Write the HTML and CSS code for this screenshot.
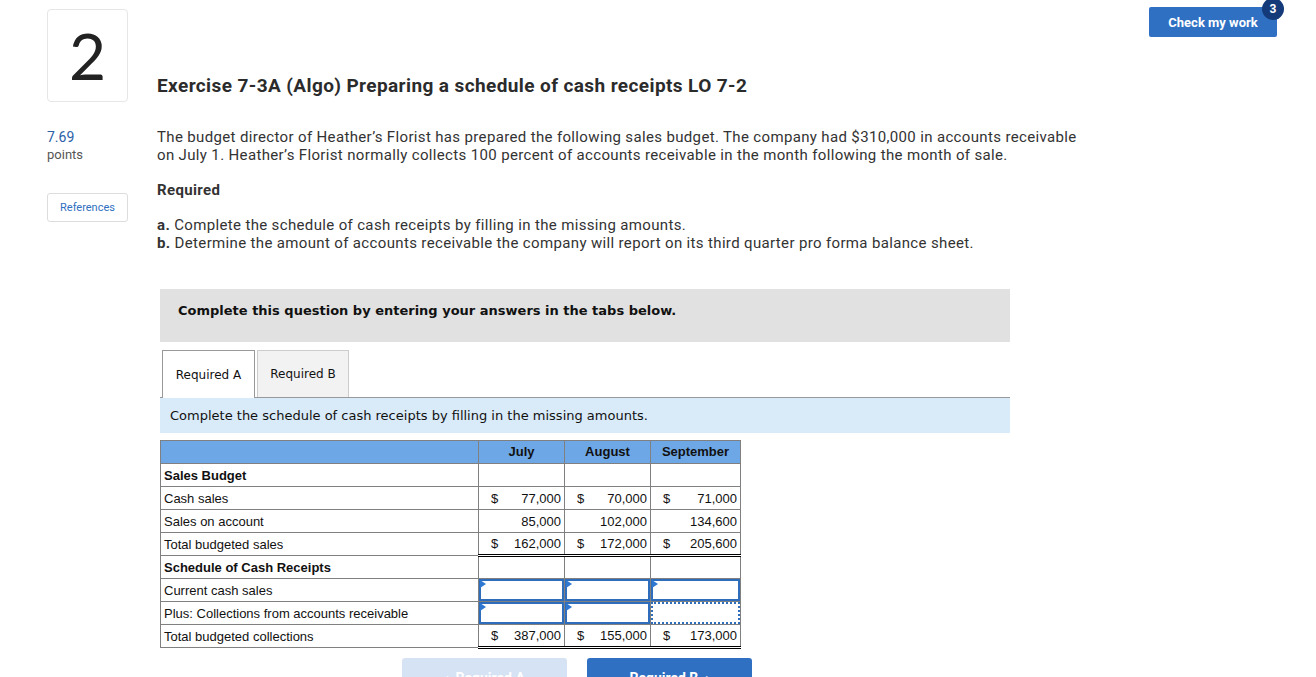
FILE: index.html
```html
<!DOCTYPE html>
<html lang="en">
<head>
    <meta charset="UTF-8">
    <title>Exercise 7-3A (Algo)</title>
    <link rel="stylesheet" href="styles.css">
</head>
<body>
<div class="page">
    <div class="qnum">2</div>
    <h1 class="title">Exercise 7-3A (Algo) Preparing a schedule of cash receipts LO 7-2</h1>
    <div class="check-wrap">
        <button class="check-btn">Check my work</button>
        <span class="badge">3</span>
    </div>

    <div class="points">
        <div class="pts-val">7.69</div>
        <div class="pts-lbl">points</div>
    </div>
    <p class="intro">The budget director of Heather’s Florist has prepared the following sales budget. The company had $310,000 in accounts receivable on July 1. Heather’s Florist normally collects 100 percent of accounts receivable in the month following the month of sale.</p>

    <div class="side">
        <button class="ref-btn">References</button>
    </div>
    <div class="content">
        <h2 class="req">Required</h2>
        <p class="req-list"><b>a.</b> Complete the schedule of cash receipts by filling in the missing amounts.<br>
        <b>b.</b> Determine the amount of accounts receivable the company will report on its third quarter pro forma balance sheet.</p>

        <div class="work">
            <div class="instr">Complete this question by entering your answers in the tabs below.</div>

            <div class="tabs">
                <div class="tab active">Required A</div>
                <div class="tab">Required B</div>
            </div>
            <div class="tab-note">Complete the schedule of cash receipts by filling in the missing amounts.</div>

            <table class="sched">
                <colgroup>
                    <col class="c-label"><col class="c-m"><col class="c-m"><col class="c-s">
                </colgroup>
                <tr class="head">
                    <th></th><th>July</th><th>August</th><th>September</th>
                </tr>
                <tr>
                    <td class="bold">Sales Budget</td><td></td><td></td><td></td>
                </tr>
                <tr>
                    <td>Cash sales</td>
                    <td><div class="money"><span>$</span><span>77,000</span></div></td>
                    <td><div class="money"><span>$</span><span>70,000</span></div></td>
                    <td><div class="money"><span>$</span><span>71,000</span></div></td>
                </tr>
                <tr>
                    <td>Sales on account</td>
                    <td><div class="money"><span></span><span>85,000</span></div></td>
                    <td><div class="money"><span></span><span>102,000</span></div></td>
                    <td><div class="money"><span></span><span>134,600</span></div></td>
                </tr>
                <tr class="total">
                    <td>Total budgeted sales</td>
                    <td><div class="money"><span>$</span><span>162,000</span></div></td>
                    <td><div class="money"><span>$</span><span>172,000</span></div></td>
                    <td><div class="money"><span>$</span><span>205,600</span></div></td>
                </tr>
                <tr>
                    <td class="bold">Schedule of Cash Receipts</td><td></td><td></td><td></td>
                </tr>
                <tr>
                    <td>Current cash sales</td>
                    <td class="in"><div class="ans"></div></td>
                    <td class="in"><div class="ans"></div></td>
                    <td class="in"><div class="ans"></div></td>
                </tr>
                <tr>
                    <td>Plus: Collections from accounts receivable</td>
                    <td class="in"><div class="ans"></div></td>
                    <td class="in"><div class="ans"></div></td>
                    <td class="in"><div class="ans dotted"></div></td>
                </tr>
                <tr class="total">
                    <td>Total budgeted collections</td>
                    <td><div class="money"><span>$</span><span>387,000</span></div></td>
                    <td><div class="money"><span>$</span><span>155,000</span></div></td>
                    <td><div class="money"><span>$</span><span>173,000</span></div></td>
                </tr>
            </table>

            <div class="nav">
                <button class="nav-btn prev">&lsaquo;&nbsp;&nbsp;Required A</button>
                <button class="nav-btn next">Required B&nbsp;&nbsp;&rsaquo;</button>
            </div>
        </div>
    </div>
</div>
</body>
</html>
```
FILE: styles.css
```css
body {
    margin: 0;
    font-family: Roboto, "Liberation Sans", sans-serif;
    color: #333;
    background: #fff;
    overflow: hidden;
}

.page {
    display: grid;
    grid-template-columns: 81px 1fr 128px;
    column-gap: 29px;
    padding: 9px 39px 0 47px;
}

.qnum {
    height: 91px;
    border: 1px solid #e6e6e6;
    border-radius: 4px;
    display: flex;
    align-items: center;
    justify-content: center;
    font-family: Lato, sans-serif;
    font-size: 64px;
    color: #222;
}

.title {
    align-self: end;
    margin: 0 0 5px;
    font-size: 19px;
    font-weight: 700;
    color: #2b2b2b;
    line-height: 22px;
    letter-spacing: 0.4px;
}

.check-wrap {
    position: relative;
    align-self: start;
    margin-top: -2px;
}

.check-btn {
    width: 128px;
    height: 30px;
    background: #2f70c3;
    color: #fff;
    border: none;
    border-radius: 2px;
    font-family: Roboto, sans-serif;
    font-weight: 700;
    font-size: 13px;
    padding: 0;
}

.badge {
    position: absolute;
    right: -7px;
    top: -9px;
    width: 22px;
    height: 22px;
    border-radius: 50%;
    background: #143a7a;
    color: #fff;
    font-weight: 700;
    font-size: 12px;
    display: flex;
    align-items: center;
    justify-content: center;
}

.points {
    margin-top: 26px;
    font-size: 13px;
    line-height: 18px;
}

.pts-val {
    color: #2b5fa8;
    font-size: 14px;
}

.pts-lbl {
    color: #555;
}

.intro {
    grid-column: 2 / 4;
    margin: 26px 0 0;
    max-width: 940px;
    font-size: 15px;
    line-height: 18px;
    letter-spacing: 0.35px;
}

.side {
    padding-top: 29px;
}

.ref-btn {
    width: 81px;
    height: 29px;
    background: #fff;
    border: 1px solid #ddd;
    border-radius: 3px;
    color: #2f6fc1;
    font-family: Roboto, sans-serif;
    font-size: 11px;
    padding: 0;
}

.content {
    grid-column: 2 / 4;
    letter-spacing: 0.35px;
}

.req {
    margin: 17px 0 0;
    font-size: 15px;
    line-height: 18px;
    font-weight: 700;
}

.req-list {
    margin: 17px 0 0;
    font-size: 15px;
    line-height: 18px;
}

.work {
    width: 850px;
    margin: 37px 0 0 3px;
    font-family: "DejaVu Sans", Verdana, sans-serif;
    letter-spacing: 0;
}

.instr {
    background: #e1e1e1;
    height: 53px;
    box-sizing: border-box;
    padding: 14px 18px 0;
    font-size: 13px;
    font-weight: 700;
    color: #111;
}

.tabs {
    display: flex;
    gap: 2px;
    margin-top: 8px;
    padding-left: 2px;
    border-bottom: 1px solid #999;
    height: 47px;
}

.tab {
    width: 92px;
    box-sizing: border-box;
    display: flex;
    align-items: center;
    justify-content: center;
    font-size: 12px;
    color: #111;
    background: #f2f2f2;
    border: 1px solid #ccc;
    border-bottom: none;
}

.tab.active {
    width: 93px;
    background: #fff;
    border-color: #999;
    margin-bottom: -1px;
}

.tab-note {
    background: #d9ebf8;
    height: 35px;
    box-sizing: border-box;
    padding: 10px 10px 0;
    font-size: 13px;
    color: #111;
}

.sched {
    margin-top: 7px;
    border-collapse: collapse;
    font-family: "Liberation Sans", Arial, sans-serif;
    font-size: 13px;
    color: #111;
}

.c-label { width: 318px; }
.c-m { width: 86px; }
.c-s { width: 90px; }

.sched th,
.sched td {
    border: 1px solid #808080;
    height: 23px;
    padding: 0 3px;
    box-sizing: border-box;
}

.sched th {
    background: #6ea7e5;
    font-weight: 700;
    text-align: center;
    padding-bottom: 2px;
}

.sched .bold {
    font-weight: 700;
}

.money {
    display: flex;
    justify-content: space-between;
    padding-left: 9px;
}

.sched .total td + td {
    border-top: 1px solid #000;
    border-bottom: 3px double #000;
}

.sched td.in {
    padding: 0;
}

.ans {
    position: relative;
    height: 22px;
    box-sizing: border-box;
    border: 2px solid #2e6cbc;
}

.ans::before {
    content: "";
    position: absolute;
    left: -1px;
    top: -1px;
    border-left: 6px solid #2e78d2;
    border-top: 4px solid transparent;
    border-bottom: 4px solid transparent;
}

.ans.dotted {
    border: 2px dotted #2e6cbc;
}

.ans.dotted::before {
    display: none;
}

.nav {
    display: flex;
    gap: 20px;
    margin-top: 9px;
    padding-left: 242px;
}

.nav-btn {
    width: 165px;
    height: 40px;
    border: none;
    border-radius: 3px;
    color: #fff;
    font-family: Roboto, sans-serif;
    font-weight: 700;
    font-size: 14px;
    padding: 0;
}

.nav-btn.prev {
    background: #d5e3f4;
}

.nav-btn.next {
    background: #2f70c3;
}
```
